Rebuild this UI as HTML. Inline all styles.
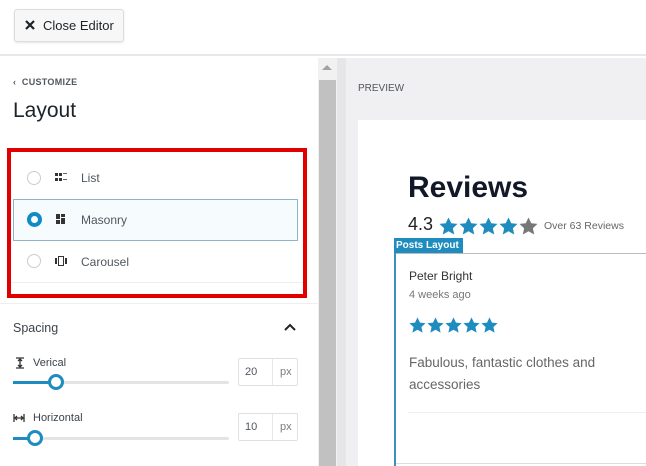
<!DOCTYPE html>
<html><head><meta charset="utf-8"><style>
*{box-sizing:border-box;margin:0;padding:0}
body{width:646px;height:466px;overflow:hidden;background:#fff;font-family:"Liberation Sans",sans-serif;position:relative;color:#2c3338}
.a{position:absolute}
</style></head><body>
<svg width="0" height="0" style="position:absolute"><defs><polygon id="st" points="10,0.5 12.9,6.6 19.5,7.3 14.6,11.8 16,18.4 10,15 4,18.4 5.4,11.8 0.5,7.3 7.1,6.6"/></defs></svg>
<div class="a" style="left:0;top:0;width:646px;height:56px;background:#fff;border-bottom:2px solid #e8e8ea"></div>
<div class="a" style="left:14px;top:9px;width:110px;height:33px;border:1px solid #ddd;border-radius:3px;background:#f7f7f7;box-shadow:0 1px 2px rgba(0,0,0,.1);font-size:13px;line-height:31px;padding-left:28px;color:#1d2327">Close Editor</div>
<svg class="a" style="left:24px;top:19px" width="12" height="12"><path d="M2 2L10 10M10 2L2 10" stroke="#1d2327" stroke-width="2.2"/></svg>
<div class="a" style="left:0;top:58px;width:318px;height:408px;background:#fff"></div>
<div class="a" style="left:13px;top:77px;font-size:9px;font-weight:bold;color:#50575e;letter-spacing:.3px">‹&nbsp;&nbsp;CUSTOMIZE</div>
<div class="a" style="left:13px;top:99px;font-size:21px;color:#1d2327">Layout</div>
<div class="a" style="left:7px;top:148px;width:300px;height:150px;border:4px solid #e00000"></div>
<div class="a" style="left:11px;top:282px;width:292px;height:1px;background:#eee"></div>
<div class="a" style="left:27px;top:171px;width:14px;height:14px;border:1.5px solid #ccc;border-radius:50%"></div>
<div class="a" style="left:55px;top:172px;width:12px;height:11px">
 <div class="a" style="left:0;top:1px;width:3px;height:3px;background:#333"></div><div class="a" style="left:4px;top:1px;width:3px;height:3px;background:#333"></div><div class="a" style="left:8px;top:1px;width:4px;height:1px;background:#666"></div>
 <div class="a" style="left:0;top:6px;width:3px;height:3px;background:#333"></div><div class="a" style="left:4px;top:6px;width:3px;height:3px;background:#333"></div><div class="a" style="left:8px;top:7px;width:4px;height:1px;background:#666"></div>
</div>
<div class="a" style="left:81px;top:171px;font-size:12px;color:#50575e">List</div>
<div class="a" style="left:13px;top:199px;width:285px;height:42px;border:1px solid #8fb3c7;background:#f6fbfd"></div>
<div class="a" style="left:27px;top:212px;width:15px;height:15px;border:4px solid #0e8cc7;border-radius:50%;background:#fff"></div>
<div class="a" style="left:56px;top:214px;width:10px;height:11px">
 <div class="a" style="left:0;top:0;width:4px;height:5px;background:#333"></div><div class="a" style="left:5px;top:0;width:4px;height:3px;background:#333"></div>
 <div class="a" style="left:0;top:6px;width:4px;height:4px;background:#333"></div><div class="a" style="left:5px;top:4px;width:4px;height:6px;background:#333"></div>
</div>
<div class="a" style="left:81px;top:213px;font-size:12px;color:#50575e">Masonry</div>
<div class="a" style="left:27px;top:254px;width:14px;height:14px;border:1.5px solid #ccc;border-radius:50%"></div>
<div class="a" style="left:55px;top:256px;width:12px;height:10px">
 <div class="a" style="left:0;top:2px;width:2px;height:6px;background:#333"></div><div class="a" style="left:3px;top:0;width:6px;height:10px;border:1.5px solid #333"></div><div class="a" style="left:10px;top:2px;width:2px;height:6px;background:#333"></div>
</div>
<div class="a" style="left:81px;top:255px;font-size:12px;color:#50575e">Carousel</div>
<div class="a" style="left:0;top:303px;width:318px;height:1px;background:#eee"></div>
<div class="a" style="left:13px;top:321px;font-size:12.5px;color:#3c434a">Spacing</div>
<svg class="a" style="left:283px;top:322px" width="14" height="10"><path d="M2 8L7 3L12 8" fill="none" stroke="#1d2327" stroke-width="2"/></svg>
<svg class="a" style="left:15px;top:357px" width="10" height="12"><path d="M1 1H9M1 11H9M5 2V10M3 4L5 2L7 4M3 8L5 10L7 8" fill="none" stroke="#333" stroke-width="1.3"/></svg>
<div class="a" style="left:33px;top:357px;font-size:11px;color:#3c434a">Verical</div>
<div class="a" style="left:13px;top:381px;width:216px;height:3px;background:#e4e4e7;border-radius:2px"></div>
<div class="a" style="left:13px;top:381px;width:44px;height:3px;background:#1e8cbe"></div>
<div class="a" style="left:48px;top:374px;width:16px;height:16px;border:3.5px solid #1e8cbe;border-radius:50%;background:#fff"></div>
<div class="a" style="left:238px;top:358px;width:60px;height:28px;border:1px solid #e0e0e0;border-radius:2px"><div class="a" style="left:33px;top:0;width:1px;height:26px;background:#e8e8e8"></div><span class="a" style="left:6px;top:7px;font-size:11px;color:#50575e">20</span><span class="a" style="left:41px;top:7px;font-size:11px;color:#787c82">px</span></div>
<svg class="a" style="left:13px;top:413px" width="12" height="10"><path d="M1 1V9M11 1V9M2 5H10M4 3L2 5L4 7M8 3L10 5L8 7" fill="none" stroke="#333" stroke-width="1.3"/></svg>
<div class="a" style="left:33px;top:412px;font-size:11px;color:#3c434a">Horizontal</div>
<div class="a" style="left:13px;top:437px;width:216px;height:3px;background:#e4e4e7;border-radius:2px"></div>
<div class="a" style="left:13px;top:437px;width:22px;height:3px;background:#1e8cbe"></div>
<div class="a" style="left:27px;top:430px;width:16px;height:16px;border:3.5px solid #1e8cbe;border-radius:50%;background:#fff"></div>
<div class="a" style="left:238px;top:413px;width:60px;height:28px;border:1px solid #e0e0e0;border-radius:2px"><div class="a" style="left:33px;top:0;width:1px;height:26px;background:#e8e8e8"></div><span class="a" style="left:6px;top:7px;font-size:11px;color:#50575e">10</span><span class="a" style="left:41px;top:7px;font-size:11px;color:#787c82">px</span></div>
<div class="a" style="left:318px;top:58px;width:19px;height:408px;background:#f1f1f1"></div>
<div class="a" style="left:322px;top:65px;width:0;height:0;border-left:5px solid transparent;border-right:5px solid transparent;border-bottom:5px solid #a3a3a3"></div>
<div class="a" style="left:319px;top:80px;width:17px;height:386px;background:#c1c1c1"></div>
<div class="a" style="left:337px;top:58px;width:309px;height:408px;background:#f0f0f2"></div>
<div class="a" style="left:337px;top:58px;width:9px;height:408px;background:#e6e6e8"></div>
<div class="a" style="left:358px;top:83px;font-size:10px;color:#50575e">PREVIEW</div>
<div class="a" style="left:358px;top:120px;width:288px;height:346px;background:#fff"></div>
<div class="a" style="left:408px;top:171px;font-size:30px;font-weight:bold;color:#111827">Reviews</div>
<div class="a" style="left:408px;top:214px;font-size:18px;color:#222">4.3</div>
<svg class="a" style="left:439px;top:217px" width="100" height="19" viewBox="0 0 100 19">
<g fill="#1e8cbe"><use href="#st" transform="translate(0,0) scale(.95)"/><use href="#st" transform="translate(20,0) scale(.95)"/><use href="#st" transform="translate(40,0) scale(.95)"/><use href="#st" transform="translate(60,0) scale(.95)"/></g>
<use href="#st" fill="#777" transform="translate(80,0) scale(.95)"/></svg>
<div class="a" style="left:544px;top:220px;font-size:10.5px;color:#666">Over 63 Reviews</div>
<div class="a" style="left:394px;top:253px;width:252px;height:1px;background:#bbb"></div>
<div class="a" style="left:394px;top:253px;width:2px;height:213px;background:#3a8fc4"></div>
<div class="a" style="left:394px;top:238px;width:69px;height:15px;background:#1e8cbe;color:#fff;font-size:10px;font-weight:bold;line-height:15px;padding-left:2px">Posts Layout</div>
<div class="a" style="left:409px;top:269px;font-size:12px;color:#333">Peter Bright</div>
<div class="a" style="left:409px;top:289px;font-size:11px;color:#777">4 weeks ago</div>
<svg class="a" style="left:409px;top:317px" width="92" height="17" viewBox="0 0 92 17">
<g fill="#1e8cbe"><use href="#st" transform="translate(0,0) scale(.85)"/><use href="#st" transform="translate(18,0) scale(.85)"/><use href="#st" transform="translate(36,0) scale(.85)"/><use href="#st" transform="translate(54,0) scale(.85)"/><use href="#st" transform="translate(72,0) scale(.85)"/></g></svg>
<div class="a" style="left:409px;top:352px;font-size:13.5px;color:#666;line-height:22px;width:230px">Fabulous, fantastic clothes and accessories</div>
<div class="a" style="left:408px;top:412px;width:238px;height:1px;background:#eee"></div>
<div class="a" style="left:396px;top:463px;width:250px;height:1px;background:#ddd"></div>
</body></html>
